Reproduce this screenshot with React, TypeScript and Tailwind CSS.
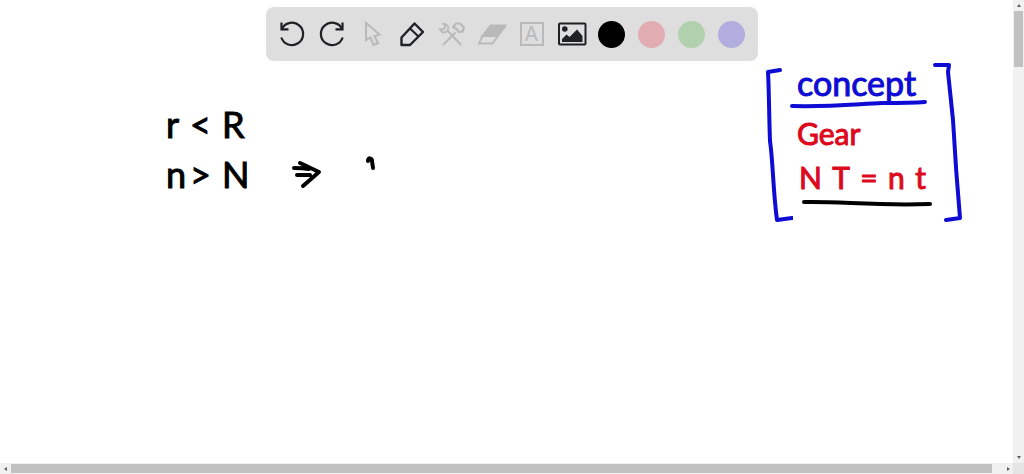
import type { ReactNode } from 'react';

const ink = "font-['Lato','Liberation_Sans',sans-serif] [-webkit-text-stroke:1px_currentColor]";

function Tool({ label, muted, children }: { label: string; muted?: boolean; children: ReactNode }) {
  return (
    <button
      type="button"
      aria-label={label}
      className={
        muted
          ? 'flex size-10 items-center justify-center text-[#b9b9b9]'
          : 'flex size-10 items-center justify-center text-[#202124]'
      }
    >
      {children}
    </button>
  );
}

function Icon({ children }: { children: ReactNode }) {
  return (
    <svg className="size-8" viewBox="0 0 32 32" fill="none" stroke="currentColor" strokeWidth="2" aria-hidden="true">
      {children}
    </svg>
  );
}

function Toolbar() {
  return (
    <div role="toolbar" aria-label="Drawing tools" className="flex items-center rounded-lg bg-[#dedede] px-1.5 py-[7px]">
      <Tool label="Undo">
        <Icon>
          <path d="M5.3 19.5a11.2 11.2 0 1 0 .7-8.800" strokeWidth="2.2" />
          <path d="M5.5 4.500v6.800h7" strokeWidth="2.2" />
        </Icon>
      </Tool>
      <Tool label="Redo">
        <Icon>
          <path d="M26.700 19.500a11.200 11.200 0 1 1-.7-8.800" strokeWidth="2.2" />
          <path d="M26.500 4.500v6.800h-7" strokeWidth="2.2" />
        </Icon>
      </Tool>
      <Tool label="Select" muted>
        <Icon>
          <path d="M10 5v17l4.500-2.500 3 7.500 4.500-1.800-3.500-7.200 5-1.500Z" strokeWidth="2" />
        </Icon>
      </Tool>
      <Tool label="Pen">
        <Icon>
          <path d="M5.5 27v-7.500L18.500 5.500l8.500 8.500L14 27Z" strokeWidth="2.4" strokeLinejoin="round" />
          <path d="m14 10.500 8.500 8" strokeWidth="2.2" />
        </Icon>
      </Tool>
      <Tool label="Tools" muted>
        <Icon>
          <path d="M7.5 6a4.200 4.200 0 1 1-3.500 5l3.500.5 2-2.500Z" strokeWidth="1.8" />
          <path d="M12 13 25 27" strokeWidth="2" />
          <path d="M7 27 19.500 14.500" strokeWidth="2" />
          <path d="m17 9 3-3.500h4l4 4-1.500 4-3.500.5-2.500-3Z" strokeWidth="2.2" strokeLinejoin="round" />
        </Icon>
      </Tool>
      <Tool label="Eraser" muted>
        <Icon>
          <path d="M14 6.500h17L21.500 19h-17Z" fill="currentColor" stroke="none" />
          <path d="M6.500 18 3 25.500h13.500l5-7 8.500-11" strokeWidth="1.8" />
        </Icon>
      </Tool>
      <Tool label="Text" muted>
        <span className="flex size-6 items-center justify-center border-2 border-current font-['Inter',sans-serif] text-xl leading-none">
          A
        </span>
      </Tool>
      <Tool label="Image">
        <Icon>
          <rect x="3" y="5.5" width="26.500" height="21" rx="1" />
          <circle cx="8.800" cy="11" r="2.800" fill="currentColor" stroke="none" />
          <path d="M6 24v-3l4.500-4.500 3 2.500 7.500-7.500 5.500 6.500V24Z" fill="currentColor" stroke="none" />
        </Icon>
      </Tool>
      <Tool label="Black">
        <span className="size-[27px] rounded-full bg-black" />
      </Tool>
      <Tool label="Red">
        <span className="size-[27px] rounded-full bg-[#e1acb2]" />
      </Tool>
      <Tool label="Green">
        <span className="size-[27px] rounded-full bg-[#b0d0ae]" />
      </Tool>
      <Tool label="Purple">
        <span className="size-[27px] rounded-full bg-[#b2addf]" />
      </Tool>
    </div>
  );
}

function Equations() {
  return (
    <div className="flex items-end pt-[38px]">
      <div className={`${ink} grid grid-cols-[24px_32px_40px] text-4xl leading-[50px] text-black`}>
        <span>r</span>
        <span>&lt;</span>
        <span>R</span>
        <span>n</span>
        <span>&gt;</span>
        <span>N</span>
      </div>
      <svg
        className="mb-1 ml-6 h-10 w-24"
        viewBox="0 0 96 40"
        fill="none"
        stroke="black"
        strokeWidth="4"
        strokeLinecap="round"
        strokeLinejoin="round"
        aria-label="implies"
      >
        <path d="M8 13c5 0 9 0 15 1M11 20h13M14 8l19 9L17 31" />
        <path d="M82 6c0-4 4-3 4 0l1 7" />
      </svg>
    </div>
  );
}

function Concept() {
  return (
    <section className="flex pt-0.5 text-[#0d0bd4]" aria-label="Concept">
      <svg
        className="h-40 w-7"
        viewBox="0 0 28 160"
        fill="none"
        stroke="currentColor"
        strokeWidth="4"
        strokeLinecap="round"
        strokeLinejoin="round"
        aria-hidden="true"
      >
        <path d="M15 7 3 9C4 25 4 52 5 78c3 20 3 50 7 79l15-2" />
      </svg>
      <div className="flex w-[139px] flex-col">
        <h1 className={`${ink} pl-1 text-[34px] leading-10`}>concept</h1>
        <svg className="h-2 w-full overflow-visible" viewBox="0 0 139 8" fill="none" aria-hidden="true">
          <path d="M-1 3c40 1 65-2 90-3 16 0 30 0 43-1" stroke="currentColor" strokeWidth="4" strokeLinecap="round" />
        </svg>
        <p className={`${ink} pl-1 text-3xl leading-[44px] text-[#dc0a1c]`}>Gear</p>
        <p className={`${ink} flex justify-between px-1.5 text-3xl leading-[44px] text-[#dc0a1c]`}>
          <span>N</span>
          <span>T</span>
          <span>=</span>
          <span>n</span>
          <span>t</span>
        </p>
        <svg className="h-2 w-full" viewBox="0 0 139 8" fill="none" aria-hidden="true">
          <path d="M11 3c35-1 70 4 126 2" stroke="black" strokeWidth="4" strokeLinecap="round" />
        </svg>
      </div>
      <svg
        className="h-40 w-[30px]"
        viewBox="0 0 30 160"
        fill="none"
        stroke="currentColor"
        strokeWidth="4"
        strokeLinecap="round"
        strokeLinejoin="round"
        aria-hidden="true"
      >
        <path d="M3 2h14l-1 7 5 48c2 36 4 64 7 98l-14 2" />
      </svg>
    </section>
  );
}

function Arrow({ d }: { d: string }) {
  return (
    <svg className="size-2" viewBox="0 0 8 8" fill="#606060" aria-hidden="true">
      <path d={d} />
    </svg>
  );
}

export default function App() {
  return (
    <div className="grid min-h-screen grid-cols-[1fr_11px] grid-rows-[1fr_11px] bg-white">
      <main className="pt-[7px]">
        <div className="flex justify-center pl-2.5">
          <Toolbar />
        </div>
        <div className="flex items-start justify-between pl-[166px] pr-[51px]">
          <Equations />
          <Concept />
        </div>
      </main>
      <div className="flex flex-col bg-[#f1f1f1]">
        <button type="button" aria-label="Scroll up" className="flex h-[11px] items-center justify-center">
          <Arrow d="M4 2 6 5H2Z" />
        </button>
        <div className="mx-px h-14 bg-[#c1c1c1]" />
        <div className="flex-1" />
        <button type="button" aria-label="Scroll down" className="flex h-[11px] items-center justify-center">
          <Arrow d="M4 5 6 2H2Z" />
        </button>
      </div>
      <div className="flex bg-[#f1f1f1]">
        <button type="button" aria-label="Scroll left" className="flex w-[11px] items-center justify-center">
          <Arrow d="M2 4 5 2V6Z" />
        </button>
        <div className="my-px mr-2.5 flex-1 bg-[#c1c1c1]" />
        <button type="button" aria-label="Scroll right" className="flex w-[11px] items-center justify-center">
          <Arrow d="M6 4 3 2V6Z" />
        </button>
      </div>
      <div className="bg-[#e4e4e4]" />
    </div>
  );
}
